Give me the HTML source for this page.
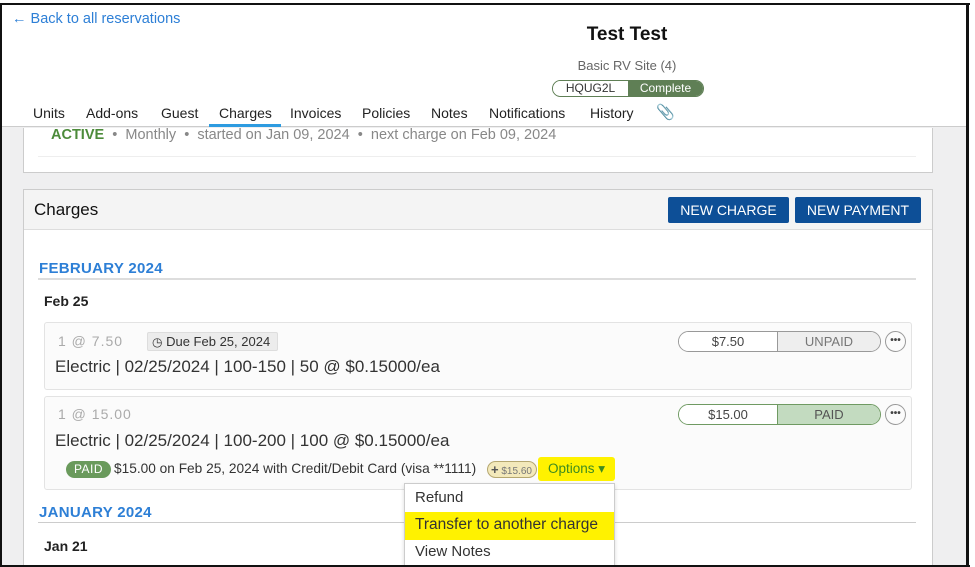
<!DOCTYPE html>
<html><head><meta charset="utf-8"><style>
*{margin:0;padding:0;box-sizing:border-box}
body{width:975px;height:567px;overflow:hidden;background:#fff;font-family:"Liberation Sans",sans-serif;position:relative}
.a{position:absolute;white-space:nowrap}
.frame{position:absolute;left:0;top:0;width:968px;height:567px;overflow:hidden;background:#efeff0}
</style></head><body>
<div class="frame">
<div class="a" style="left:0;top:0;width:968px;height:127px;background:#fff;border-bottom:1px solid #ccc"></div>
<div class="a" style="left:12px;top:11px;color:#2d7fd6;font-size:14.5px">&#8592; Back to all reservations</div>
<div class="a" style="left:560px;top:24px;width:134px;text-align:center;font-size:19px;font-weight:bold;color:#111">Test Test</div>
<div class="a" style="left:560px;top:58px;width:134px;text-align:center;font-size:13px;color:#666">Basic RV Site (4)</div>
<div class="a" style="left:552px;top:80px;width:152px;height:17px;border:1px solid #5f7f55;border-radius:9px;overflow:hidden;font-size:12px;display:flex">
<div style="width:75px;text-align:center;line-height:15px;background:#fff;color:#333">HQUG2L</div>
<div style="flex:1;text-align:center;line-height:15px;background:#5f7f55;color:#fff">Complete</div></div>
<div class="a" style="top:105px;left:33px;font-size:14px;color:#222">Units</div>
<div class="a" style="top:105px;left:86px;font-size:14px;color:#222">Add-ons</div>
<div class="a" style="top:105px;left:161px;font-size:14px;color:#222">Guest</div>
<div class="a" style="top:105px;left:219px;font-size:14px;color:#222">Charges</div>
<div class="a" style="top:105px;left:290px;font-size:14px;color:#222">Invoices</div>
<div class="a" style="top:105px;left:362px;font-size:14px;color:#222">Policies</div>
<div class="a" style="top:105px;left:431px;font-size:14px;color:#222">Notes</div>
<div class="a" style="top:105px;left:489px;font-size:14px;color:#222">Notifications</div>
<div class="a" style="top:105px;left:590px;font-size:14px;color:#222">History</div>
<div class="a" style="top:103px;left:656px;font-size:15px;color:#555">&#128206;</div>
<div class="a" style="left:209px;top:124px;width:72px;height:3px;background:#2d9be0"></div>

<div class="a" style="left:23px;top:128px;width:910px;height:45px;background:#fff;border:1px solid #ccc;border-top:none"></div>
<div class="a" style="left:51px;top:127px;font-size:14.5px;color:#888"><b style="color:#4c8b3a">ACTIVE</b> &nbsp;•&nbsp; Monthly &nbsp;•&nbsp; started on Jan 09, 2024 &nbsp;•&nbsp; next charge on Feb 09, 2024</div>
<div class="a" style="left:38px;top:156px;width:878px;height:1px;background:#eee"></div>

<div class="a" style="left:23px;top:189px;width:910px;height:400px;background:#fff;border:1px solid #ccc"></div>
<div class="a" style="left:24px;top:190px;width:908px;height:40px;background:#f4f4f4;border-bottom:1px solid #ddd"></div>
<div class="a" style="left:34px;top:200px;font-size:17px;color:#111">Charges</div>
<div class="a" style="left:668px;top:197px;width:121px;height:26px;background:#0d4f97;color:#fff;font-size:14px;text-align:center;line-height:26px;border-radius:2px">NEW CHARGE</div>
<div class="a" style="left:795px;top:197px;width:126px;height:26px;background:#0d4f97;color:#fff;font-size:14px;text-align:center;line-height:26px;border-radius:2px">NEW PAYMENT</div>

<div class="a" style="left:39px;top:260px;font-size:15px;font-weight:bold;color:#2d7fd6;letter-spacing:.3px">FEBRUARY 2024</div>
<div class="a" style="left:38px;top:278px;width:878px;height:2px;background:#ddd"></div>
<div class="a" style="left:44px;top:293px;font-size:14px;font-weight:bold;color:#222">Feb 25</div>

<div class="a" style="left:44px;top:322px;width:868px;height:68px;background:#fbfbfb;border:1px solid #e3e3e3;border-radius:3px"></div>
<div class="a" style="left:58px;top:333px;font-size:14px;color:#aaa;letter-spacing:1px">1 @ 7.50</div>
<div class="a" style="left:147px;top:332px;width:131px;height:19px;background:#ececec;border:1px solid #ddd;border-radius:2px;font-size:13px;color:#333;line-height:17px;padding-left:4px"><span style="font-size:12px">&#9719;</span> Due Feb 25, 2024</div>
<div class="a" style="left:55px;top:357px;font-size:17px;color:#333">Electric | 02/25/2024 | 100-150 | 50 @ $0.15000/ea</div>
<div class="a" style="left:678px;top:331px;width:203px;height:21px;border:1px solid #999;border-radius:11px;overflow:hidden;display:flex;font-size:13px;line-height:19px">
<div style="width:99px;text-align:center;color:#444;background:#fff;border-right:1px solid #999">$7.50</div>
<div style="flex:1;text-align:center;color:#777;background:#eee">UNPAID</div></div>
<div class="a" style="left:885px;top:331px;width:21px;height:21px;border:1px solid #999;border-radius:50%;text-align:center;font-size:10px;line-height:18px;color:#444;font-weight:bold">•••</div>

<div class="a" style="left:44px;top:396px;width:868px;height:94px;background:#fbfbfb;border:1px solid #e3e3e3;border-radius:3px"></div>
<div class="a" style="left:58px;top:406px;font-size:14px;color:#aaa;letter-spacing:1px">1 @ 15.00</div>
<div class="a" style="left:55px;top:431px;font-size:17px;color:#333">Electric | 02/25/2024 | 100-200 | 100 @ $0.15000/ea</div>
<div class="a" style="left:678px;top:404px;width:203px;height:21px;border:1px solid #6f9a62;border-radius:11px;overflow:hidden;display:flex;font-size:13px;line-height:19px">
<div style="width:99px;text-align:center;color:#444;background:#fff;border-right:1px solid #6f9a62">$15.00</div>
<div style="flex:1;text-align:center;color:#555;background:#c3dbc0">PAID</div></div>
<div class="a" style="left:885px;top:404px;width:21px;height:21px;border:1px solid #999;border-radius:50%;text-align:center;font-size:10px;line-height:18px;color:#444;font-weight:bold">•••</div>
<div class="a" style="left:66px;top:461px;width:45px;height:17px;background:#6a9a5c;border-radius:9px;color:#fff;font-size:12px;text-align:center;line-height:17px;letter-spacing:.5px">PAID</div>
<div class="a" style="left:114px;top:461px;font-size:13.7px;color:#333">$15.00 on Feb 25, 2024 with Credit/Debit Card (visa **1111)</div>
<div class="a" style="left:487px;top:461px;width:50px;height:17px;background:#f3e9bb;border:1px solid #b5a770;border-radius:9px;font-size:10px;color:#777;line-height:15px;padding-left:3px"><b style="font-size:13px;color:#555">+</b> $15.60</div>
<div class="a" style="left:538px;top:457px;width:77px;height:24px;background:#fff200;border-radius:3px"></div>
<div class="a" style="left:548px;top:461px;font-size:13.5px;color:#3d8b1f">Options &#9662;</div>

<div class="a" style="left:39px;top:504px;font-size:15px;font-weight:bold;color:#2d7fd6;letter-spacing:.3px">JANUARY 2024</div>
<div class="a" style="left:38px;top:522px;width:878px;height:1px;background:#ccc"></div>
<div class="a" style="left:44px;top:538px;font-size:14px;font-weight:bold;color:#222">Jan 21</div>

<div class="a" style="left:404px;top:483px;width:211px;height:90px;background:#fff;border:1px solid #ccc;box-shadow:0 2px 4px rgba(0,0,0,.15)"></div>
<div class="a" style="left:415px;top:489px;font-size:15px;color:#333">Refund</div>
<div class="a" style="left:405px;top:512px;width:209px;height:28px;background:#fff200"></div>
<div class="a" style="left:415px;top:516px;font-size:15.5px;color:#333">Transfer to another charge</div>
<div class="a" style="left:415px;top:543px;font-size:15px;color:#333">View Notes</div>
</div>
<div class="a" style="left:0;top:3px;width:970px;height:2px;background:#111"></div>
<div class="a" style="left:0;top:3px;width:2px;height:564px;background:#111"></div>
<div class="a" style="left:966px;top:3px;width:3px;height:564px;background:#111"></div>
<div class="a" style="left:0;top:565px;width:970px;height:2px;background:#111"></div>
</body></html>
